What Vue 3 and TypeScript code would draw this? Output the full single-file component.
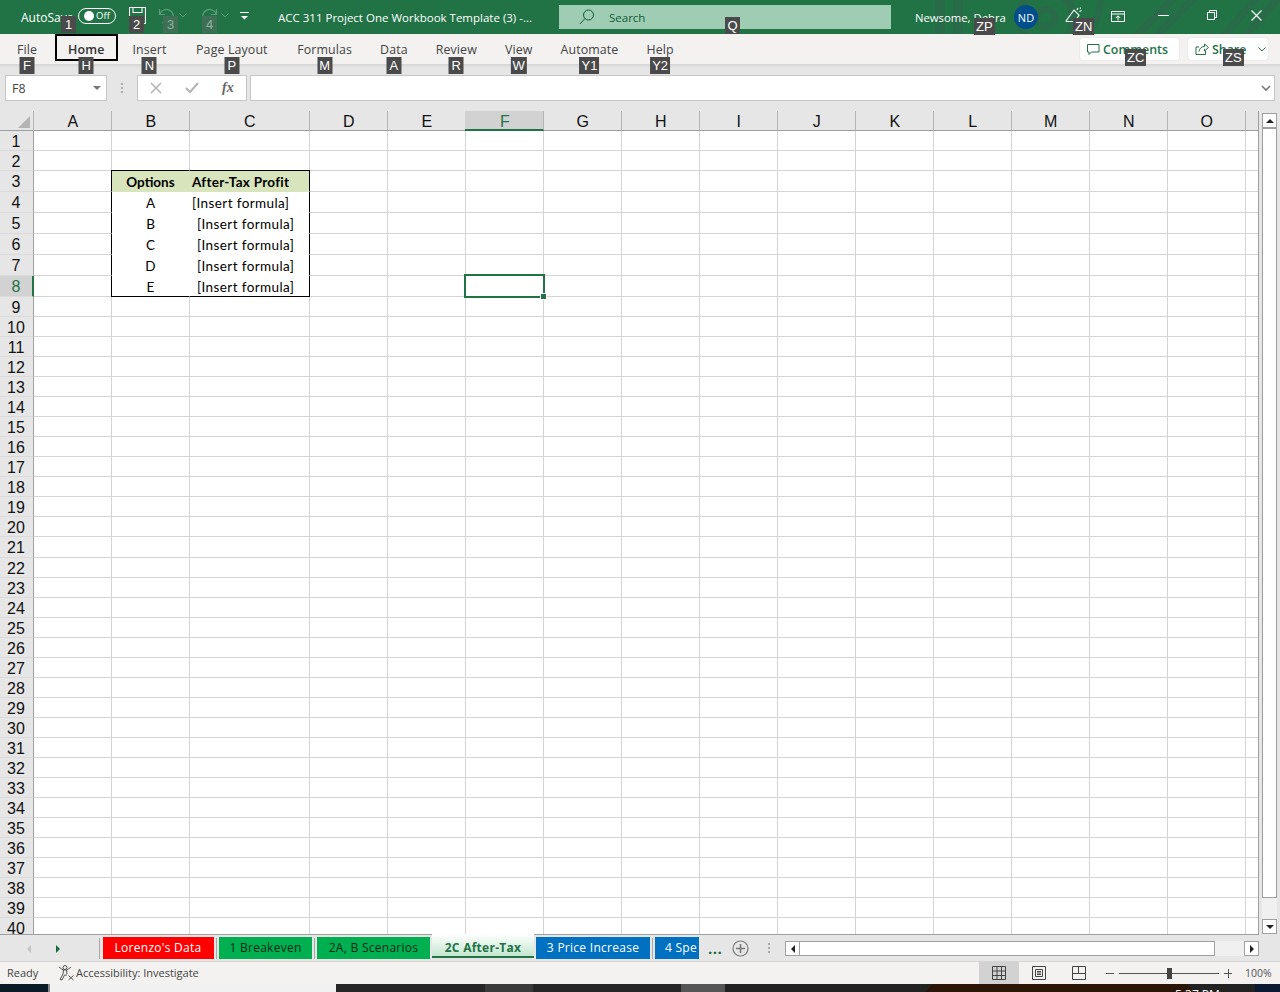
<script setup lang="ts">
const colWidths = [78, 78, 120, 78, 78, 78, 78, 78, 78, 78, 78, 78, 78, 78, 78, 13]
const colNames = ['A', 'B', 'C', 'D', 'E', 'F', 'G', 'H', 'I', 'J', 'K', 'L', 'M', 'N', 'O', '']
const rows = Array.from({ length: 40 }, (_, i) => i + 1)
const rowHeight = (r: number) => ((r >= 3 && r <= 8) || r === 21 ? 21 : 20)
const gridCols = '34px ' + colWidths.map((w) => w + 'px').join(' ')
const gridRows = '20px ' + rows.map((r) => rowHeight(r) + 'px').join(' ')

type Content = { text: string; cls: string }
const content: Record<string, Content> = {
  'B3': { text: 'Options', cls: 'hd center tl' },
  'C3': { text: 'After-Tax Profit', cls: 'hd pad tr spaced' },
  'B4': { text: 'A', cls: 'tb center le' },
  'C4': { text: '[Insert formula]', cls: 'tb pad ri formula-text' },
  'B5': { text: 'B', cls: 'tb center le' },
  'C5': { text: '[Insert formula]', cls: 'tb ind ri formula-text' },
  'B6': { text: 'C', cls: 'tb center le' },
  'C6': { text: '[Insert formula]', cls: 'tb ind ri formula-text' },
  'B7': { text: 'D', cls: 'tb center le' },
  'C7': { text: '[Insert formula]', cls: 'tb ind ri formula-text' },
  'B8': { text: 'E', cls: 'tb center le bo' },
  'C8': { text: '[Insert formula]', cls: 'tb ind ri bo formula-text' },
}
const cell = (c: string, r: number) => content[c + r]

const ribbonTabs = [
  { label: 'File', tip: 'F' },
  { label: 'Home', tip: 'H', active: true },
  { label: 'Insert', tip: 'N' },
  { label: 'Page Layout', tip: 'P' },
  { label: 'Formulas', tip: 'M' },
  { label: 'Data', tip: 'A' },
  { label: 'Review', tip: 'R' },
  { label: 'View', tip: 'W' },
  { label: 'Automate', tip: 'Y1' },
  { label: 'Help', tip: 'Y2' },
]
const sheets = [
  { label: "Lorenzo's Data", cls: 'red' },
  { label: '1 Breakeven', cls: 'green' },
  { label: '2A, B Scenarios', cls: 'green wide' },
  { label: '2C After-Tax', cls: 'current' },
  { label: '3 Price Increase', cls: 'blue' },
  { label: '4 Spe', cls: 'blue cut' },
]
</script>

<template>
  <div class="app">
    <header class="title">
      <svg class="pattern" width="400" height="34" viewBox="0 0 400 34">
        <g fill="none" stroke="#296a49" stroke-width="10">
          <circle cx="166" cy="18" r="9" stroke-width="6" />
          <circle cx="166" cy="18" r="27" stroke-width="8" />
          <path d="M60 -4v44M78 -4v44" />
          <path d="M252 40l46-46M272 40l46-46M340 40l40-46M362 40l40-46" stroke-width="7" />
          <path d="M220 -6a60 60 0 0 1 -20 50" stroke-width="6" />
        </g>
      </svg>
      <span class="autosave">AutoSave</span>
      <span class="toggle"><i class="knob"></i><b>Off</b></span>
      <svg class="qa save" width="17" height="18" viewBox="0 0 17 18" fill="none" stroke="#fff" stroke-width="1.1"><path d="M.5.500h16v16h-16zM4 .500v5h9v-5M4 16.500v-6h9v6" /></svg>
      <svg class="qa undo" width="18" height="18" viewBox="0 0 18 18" fill="none" stroke="#5f9a7c" stroke-width="1.2"><path d="M1.500 2v5.500h5.500M1.800 7.200a7 7 0 1 1 2.600 8" /></svg>
      <svg class="qa chev1" width="8" height="5" viewBox="0 0 8 5" fill="none" stroke="#5f9a7c"><path d="M.5.500l3.500 3.500 3.500-3.500" /></svg>
      <svg class="qa redo" width="18" height="18" viewBox="0 0 18 18" fill="none" stroke="#5f9a7c" stroke-width="1.2"><path d="M16.500 2v5.500h-5.500M16.200 7.200a7 7 0 1 0-2.600 8" /></svg>
      <svg class="qa chev2" width="8" height="5" viewBox="0 0 8 5" fill="none" stroke="#5f9a7c"><path d="M.5.500l3.500 3.500 3.500-3.500" /></svg>
      <svg class="qa cust" width="9" height="8" viewBox="0 0 9 8" fill="#fff"><rect y="0" width="9" height="1" /><path d="M1 4h7L4.500 7.500z" /></svg>
      <span class="doc">ACC 311 Project One Workbook Template (3)  -...</span>
      <div class="search">
        <svg width="16" height="16" viewBox="0 0 16 16" fill="none" stroke="#0f5c35" stroke-width="1"><circle cx="9.500" cy="6" r="5" /><path d="M6 9.500L.8 15" /></svg>
        <span>Search</span>
      </div>
      <span class="user">Newsome, Debra</span>
      <span class="avatar">ND</span>
      <svg class="wand" width="18" height="18" viewBox="0 0 18 18" fill="none" stroke="#fff" stroke-width="1.1"><path d="M1 15L9 4l5 5-4 6.500H2zM12 4l1-2M14.500 5.500l2-1M15 2.500l.8-.8" /></svg>
      <svg class="rib" width="14" height="11" viewBox="0 0 14 11" fill="none" stroke="#fff"><path d="M.5.500h13v10H.500zM.500 3h13M7 9.500V5M4.800 7L7 4.800 9.200 7" /></svg>
      <svg class="win min" width="11" height="1" viewBox="0 0 11 1"><rect width="11" height="1" fill="#fff" /></svg>
      <svg class="win max" width="10" height="10" viewBox="0 0 10 10" fill="none" stroke="#fff"><path d="M.5 2.500h7v7h-7zM2.500 2.500v-2h7v7h-2" /></svg>
      <svg class="win cls" width="11" height="11" viewBox="0 0 11 11" fill="none" stroke="#fff" stroke-width="1.100"><path d="M.5.500l10 10M10.500.500l-10 10" /></svg>
      <span class="tip t1">1</span>
      <span class="tip t2">2</span>
      <span class="tip t3">3</span>
      <span class="tip t4">4</span>
      <span class="tip tq">Q</span>
      <span class="tip tzp">ZP</span>
      <span class="tip tzn">ZN</span>
    </header>

    <nav class="ribbon">
      <div class="rtabs">
        <div v-for="t in ribbonTabs" :key="t.label" class="rtab" :class="{ active: t.active }">
          {{ t.label }}
          <span class="tip rtip">{{ t.tip }}</span>
        </div>
      </div>
      <div class="actions">
        <div class="btn comments">
          <svg width="13" height="13" viewBox="0 0 13 13" fill="none" stroke="#217346"><path d="M.5 1.500h11.500v7.500H4.500L2 11.500V9H.5z" /></svg>
          <span>Comments</span>
          <span class="tip btip zc">ZC</span>
        </div>
        <div class="btn share">
          <svg width="14" height="14" viewBox="0 0 14 14" fill="none" stroke="#217346"><path d="M10.500 9v3.500h-9.500V5h3M4 9.500C4.500 6 7 4.500 9.500 4.500V2l4 3.500-4 3.500V6.800" /></svg>
          <span>Share</span>
          <svg class="mini" width="8" height="5" viewBox="0 0 8 5" fill="none" stroke="#217346"><path d="M.5.500l3.500 3.500 3.500-3.500" /></svg>
          <span class="tip btip zs">ZS</span>
        </div>
      </div>
    </nav>

    <section class="formula">
      <div class="namebox">
        <span>F8</span>
        <i class="tri-down"></i>
      </div>
      <div class="vdots"><i></i><i></i><i></i></div>
      <div class="fbtns">
        <svg width="12" height="12" viewBox="0 0 12 12" fill="none" stroke="#b4b4b4" stroke-width="1.500"><path d="M1 1l10 10M11 1L1 11" /></svg>
        <svg width="14" height="12" viewBox="0 0 14 12" fill="none" stroke="#b4b4b4" stroke-width="2"><path d="M1 6l4 4 8-9" /></svg>
        <em>fx</em>
      </div>
      <div class="finput">
        <svg width="10" height="7" viewBox="0 0 10 7" fill="none" stroke="#777" stroke-width="1.600"><path d="M1 1l4 4 4-4" /></svg>
      </div>
    </section>

    <main class="sheet">
      <div class="grid" :style="{ gridTemplateColumns: gridCols, gridTemplateRows: gridRows }">
        <div class="corner"><i></i></div>
        <div v-for="c in colNames" :key="'h' + c" class="colh" :class="{ sel: c === 'F' }">{{ c }}</div>
        <template v-for="r in rows" :key="r">
          <div class="rowh" :class="{ sel: r === 8 }">{{ r }}</div>
          <div
            v-for="c in colNames"
            :key="c + r"
            class="cell"
            :class="[cell(c, r)?.cls, { active: c === 'F' && r === 8 }]"
          >{{ cell(c, r)?.text }}<i v-if="c === 'F' && r === 8" class="handle"></i></div>
        </template>
      </div>
      <aside class="vscroll">
        <div class="sbtn"><i class="up"></i></div>
        <div class="vthumb"></div>
        <div class="vrest"></div>
        <div class="sbtn"><i class="down"></i></div>
      </aside>
    </main>

    <section class="tabsbar">
      <div class="navs">
        <i class="arrow-l"></i>
        <i class="arrow-r"></i>
      </div>
      <div class="sheet-tabs">
        <div v-for="s in sheets" :key="s.label" class="stab" :class="s.cls">{{ s.label }}</div>
      </div>
      <span class="more">...</span>
      <svg class="plus" width="17" height="17" viewBox="0 0 17 17" fill="none" stroke="#7a7a7a"><circle cx="8.500" cy="8.500" r="7.500" stroke-width="1.200" /><path d="M8.500 4v9M4 8.500h9" stroke-width="1.600" /></svg>
      <div class="vdots tdots"><i></i><i></i><i></i></div>
      <div class="hscroll">
        <div class="hbtn"><i class="left"></i></div>
        <div class="hthumb"></div>
        <div class="hrest"></div>
        <div class="hbtn"><i class="right"></i></div>
      </div>
    </section>

    <footer class="status">
      <span class="ready">Ready</span>
      <svg class="acc" width="17" height="16" viewBox="0 0 17 16" fill="none" stroke="#555"><circle cx="7" cy="2.500" r="2" /><path d="M1 2L5 5h4l4-3M5.500 5L5 9 2 14.500l2 .5 2.500-5H9M8.500 5L9 9" /><path d="M10.500 10.500l5 4.500M15.500 10.500l-5 4.500" /></svg>
      <span class="accy">Accessibility: Investigate</span>
      <div class="views">
        <div class="view on">
          <svg width="14" height="14" viewBox="0 0 14 14" fill="none" stroke="#444"><path d="M.5.500h13v13H.500zM.500 5h13M.500 9.500h13M5 .500v13M9.500 .500v13" /></svg>
        </div>
        <div class="view">
          <svg width="14" height="14" viewBox="0 0 14 14" fill="none" stroke="#444"><path d="M.5.500h13v13H.500zM3.500 3.500h7v7h-7zM5 5.500h4M5 7h4M5 8.500h4" /></svg>
        </div>
        <div class="view">
          <svg width="14" height="14" viewBox="0 0 14 14" fill="none" stroke="#444"><path d="M.5.500h13v13H.500zM.500 7.500h6v-7M6.500 7.500h7" /></svg>
        </div>
      </div>
      <div class="zoom">
        <i class="zm"></i>
        <div class="ztrack"><i class="zthumb"></i></div>
        <i class="zp"></i>
      </div>
      <span class="pct">100%</span>
    </footer>

    <div class="taskbar">
      <i class="tk navy"></i>
      <i class="tk light"></i>
      <i class="tk dark a"></i>
      <i class="tk mid b"></i>
      <i class="tk dark c"></i>
      <i class="tk hi d"></i>
      <i class="tk dark e"></i>
      <i class="tk brown f"></i>
      <i class="tk dark g"></i>
      <i class="tk navy h"></i>
      <span class="clock">5:37 PM</span>
    </div>
  </div>
</template>

<style>
html, body { margin: 0; padding: 0; background: #e6e6e6; }
</style>

<style scoped>
.app { width: 1280px; height: 992px; display: flex; flex-direction: column; overflow: hidden; font-family: "Open Sans", "Noto Sans", sans-serif; position: relative; color: #444; }

/* title bar */
.title { height: 34px; flex: none; background: #217346; color: #fff; display: flex; align-items: center; position: relative; font-size: 12px; }
.title > * { flex: none; }
.pattern { position: absolute; right: 0; top: 0; }
.autosave { margin-left: 21px; width: 57px; font-size: 12px; white-space: nowrap; }
.toggle { width: 38px; height: 16px; box-sizing: border-box; border: 1px solid #fff; border-radius: 9px; position: relative; display: block; margin-top: -3px; }
.knob { position: absolute; left: 5px; top: 2px; width: 10px; height: 10px; border-radius: 50%; background: #fff; }
.toggle b { position: absolute; left: 17px; top: 0; font-weight: 400; font-size: 9.500px; line-height: 14px; }
.qa { position: relative; }
.save { margin-left: 13px; margin-top: -3px; }
.undo { margin-left: 12px; margin-top: -3px; }
.chev1 { margin-left: 3px; margin-top: -3px; }
.redo { margin-left: 13px; margin-top: -3px; }
.chev2 { margin-left: 3px; margin-top: -3px; }
.cust { margin-left: 11px; margin-top: -3px; }
.doc { margin-left: 29px; width: 281px; white-space: pre; font-size: 11.500px; position: relative; overflow: hidden; }
.search { margin-left: 0; width: 332px; height: 24px; background: #9fcdb3; display: flex; align-items: center; color: #0f5c35; font-size: 11.500px; position: relative; }
.search svg { margin-left: 20px; margin-top: -1px; }
.search span { margin-left: 14px; }
.user { margin-left: 24px; width: 99px; white-space: nowrap; font-size: 11.300px; position: relative; }
.avatar { width: 24px; height: 24px; border-radius: 50%; background: #004e8c; display: flex; align-items: center; justify-content: center; font-size: 11px; position: relative; }
.wand { margin-left: 27px; position: relative; margin-top: -4px; }
.rib { margin-left: 28px; position: relative; margin-top: -2px; }
.win { position: relative; margin-top: -4px; }
.min { margin-left: 33px; }
.max { margin-left: 38px; }
.cls { margin-left: 34px; }

/* key tips */
.tip { position: absolute; background: #4a4a4a; color: #fff; font-family: "Liberation Sans", sans-serif; font-size: 13px; line-height: 17px; height: 17px; padding: 0 2px; min-width: 15px; box-sizing: border-box; text-align: center; z-index: 5; font-weight: 400; white-space: nowrap; letter-spacing: 0; }
.t1 { left: 61px; top: 16px; }
.t2 { left: 129px; top: 16px; }
.t3 { left: 163px; top: 16px; background: #3f6f55; color: #8fb3a0; }
.t4 { left: 202px; top: 16px; background: #3f6f55; color: #8fb3a0; }
.tq { left: 725px; top: 17px; }
.tzp { left: 974px; top: 18px; }
.tzn { left: 1073px; top: 18px; }
.rtip { top: 23px; left: 50%; transform: translateX(-50%); }
.btip { top: 11px; }
.zc { left: 45px; }
.zs { left: 35px; }

/* ribbon */
.ribbon { height: 30px; flex: none; background: #f3f2f1; display: flex; justify-content: space-between; position: relative; z-index: 3; }
.rtabs { display: flex; gap: 29.500px; padding-left: 17px; }
.rtab { position: relative; font-size: 12.400px; letter-spacing: .12px; line-height: 31px; color: #444; white-space: nowrap; }
.rtab:nth-child(2) { margin-left: 1.500px; }
.rtab:nth-child(3) { margin-left: -1.500px; }
.rtab:nth-child(n+6) { margin-left: -1.500px; }
.rtab.active { font-weight: 600; color: #333; }
.rtab.active::before { content: ""; position: absolute; left: -13px; right: -14px; top: 0; height: 27px; box-sizing: border-box; border: 2px solid #000; }
.actions { display: flex; gap: 9px; padding-right: 12px; padding-top: 4px; }
.btn { position: relative; height: 22px; background: #fff; border-radius: 2px; box-shadow: 0 0 1px #bbb; display: flex; align-items: center; color: #217346; font-size: 12.400px; font-weight: 600; }
.comments { width: 99px; padding-left: 7px; box-sizing: border-box; gap: 3px; }
.share { width: 80px; padding-left: 7px; box-sizing: border-box; gap: 3px; }
.mini { margin-left: 9px; }

/* formula bar */
.formula { height: 47px; flex: none; box-sizing: border-box; padding: 11px 5px 10px 5px; background: linear-gradient(#d5d5d5, #e6e6e6 4px); display: flex; align-items: stretch; }
.namebox { width: 102px; box-sizing: border-box; background: #fff; border: 1px solid #c6c6c6; display: flex; align-items: center; justify-content: space-between; padding: 0 5px 0 6px; font-size: 12.400px; color: #444; }
.tri-down { width: 0; height: 0; border-left: 4px solid transparent; border-right: 4px solid transparent; border-top: 4px solid #777; }
.vdots { width: 30px; display: flex; flex-direction: column; align-items: center; justify-content: center; gap: 2px; }
.vdots i { width: 2px; height: 2px; background: #aaa; }
.fbtns { width: 110px; box-sizing: border-box; background: #fff; border: 1px solid #c6c6c6; display: flex; align-items: center; padding-left: 12px; gap: 23px; }
.fbtns em { font-family: "Liberation Serif", serif; font-size: 14px; color: #666; font-style: italic; font-weight: 700; margin-left: 0; }
.finput { width: 1025px; margin-left: 3px; box-sizing: border-box; background: #fff; border: 1px solid #c6c6c6; display: flex; align-items: center; justify-content: flex-end; padding-right: 3px; }

/* sheet */
.sheet { height: 824px; flex: none; display: flex; background: #e6e6e6; }
.grid { width: 1259px; height: 824px; flex: none; display: grid; overflow: hidden; background: #fff; box-sizing: border-box; border-right: 1px solid #9f9f9f; border-bottom: 1px solid #9f9f9f; position: relative; align-content: start; }
.corner { background: #e6e6e6; border-right: 1px solid #b5b5b5; border-bottom: 1px solid #9f9f9f; box-sizing: border-box; position: relative; }
.corner i { position: absolute; right: 3px; bottom: 2px; width: 0; height: 0; border-left: 12px solid transparent; border-bottom: 12px solid #b4b4b4; }
.colh { background: #e6e6e6; border-right: 1px solid #b5b5b5; border-bottom: 1px solid #9f9f9f; box-sizing: border-box; font: 16px/22px "Liberation Sans", sans-serif; text-align: center; color: #111; padding-left: .5px; overflow: hidden; }
.colh.sel { background: #d2d2d2; color: #217346; border-bottom: 2px solid #217346; margin-left: -1px; padding-left: 2px; }
.rowh { background: #e6e6e6; border-right: 1px solid #9f9f9f; border-bottom: 1px solid #dadada; box-sizing: border-box; font: 16px/22px "Liberation Sans", sans-serif; text-align: center; color: #111; padding-right: 1px; overflow: hidden; }
.rowh.sel { background: #d2d2d2; color: #217346; border-right: 2px solid #217346; padding-right: 0; }
.cell { border-right: 1px solid #d4d4d4; border-bottom: 1px solid #d4d4d4; box-sizing: border-box; font-family: Lato, "Open Sans", sans-serif; font-size: 13.500px; line-height: 21px; color: #000; white-space: nowrap; position: relative; }
.cell.center { text-align: center; }
.cell.hd { background: #d8e4bc; font-weight: 700; border-color: transparent; border-top: 1px solid #000; margin-top: -1px; height: 22px; line-height: 22px; }
.cell.spaced { letter-spacing: .27px; }
.cell.tb { background: #fff; border-color: transparent; line-height: 23px; }
.cell.formula-text { letter-spacing: .4px; }
.cell.pad { padding-left: 2px; }
.cell.ind { padding-left: 7px; }
.cell.tl, .cell.le { border-left: 1px solid #000; margin-left: -1px; }
.cell.tr, .cell.ri { border-right: 1px solid #000; }
.cell.bo { border-bottom: 1px solid #000; }
.cell.active { outline: 2px solid #217346; outline-offset: 0; margin: 0 1px 1px 0; border: none; z-index: 2; }
.handle { position: absolute; right: -4px; bottom: -4px; background: #217346; border: 1px solid #fff; box-sizing: content-box; width: 5px; height: 5px; }

/* vertical scrollbar */
.vscroll { width: 21px; flex: none; display: flex; flex-direction: column; align-items: center; padding: 2px 0 1px; box-sizing: border-box; }
.sbtn { width: 15px; height: 15px; flex: none; background: #fff; border: 1px solid #a0a0a0; box-sizing: border-box; display: flex; align-items: center; justify-content: center; }
.up { width: 0; height: 0; border-left: 4px solid transparent; border-right: 4px solid transparent; border-bottom: 4px solid #222; }
.down { width: 0; height: 0; border-left: 4px solid transparent; border-right: 4px solid transparent; border-top: 4px solid #222; }
.vthumb { width: 15px; height: 770px; flex: none; background: #fff; border: 1px solid #a0a0a0; box-sizing: border-box; }
.vrest { flex: 1; width: 15px; background: #f0f0f0; }

/* sheet tabs */
.tabsbar { height: 27px; flex: none; background: #e6e6e6; display: flex; align-items: flex-start; border-bottom: 1px solid #d4d4d4; box-sizing: border-box; position: relative; z-index: 2; }
.navs { width: 100px; height: 21px; margin-top: 3px; box-sizing: border-box; border-right: 1px solid #a8a8a8; position: relative; flex: none; }
.arrow-l { position: absolute; left: 27px; top: 7px; width: 0; height: 0; border-top: 4px solid transparent; border-bottom: 4px solid transparent; border-right: 4px solid #c4c4c4; }
.arrow-r { position: absolute; left: 56px; top: 7px; width: 0; height: 0; border-top: 4px solid transparent; border-bottom: 4px solid transparent; border-left: 4px solid #0e6b3a; }
.sheet-tabs { display: flex; margin-left: 3px; width: 596px; flex: none; margin-top: -1px; padding-top: 1px; overflow: hidden; }
.stab { height: 22px; margin-top: 2px; flex: none; font-family: "Open Sans", sans-serif; font-size: 12px; letter-spacing: .27px; line-height: 22px; text-align: center; white-space: nowrap; margin-right: 5px; position: relative; }
.stab::after { content: ""; position: absolute; right: -3px; top: 1px; bottom: 0; width: 1px; background: #a8a8a8; }
.red { background: #ff0000; color: #fff; width: 111px; padding-right: 1px; box-sizing: border-box; }
.green { background: #00b050; color: #0a2a18; width: 93px; }
.wide { width: 113px; margin-right: 2px; }
.wide::after { display: none; }
.current { margin-top: -1px; padding-top: 3px; background: linear-gradient(#ffffff, #c3e6cf); color: #217346; font-weight: 700; width: 102px; margin-right: 2px; border-bottom: 2px solid #217346; box-sizing: content-box; height: 19px; line-height: 21px; overflow: hidden; }
.current::after { display: none; }
.blue { background: #0070c0; color: #fff; width: 114px; }
.cut { width: 44px; margin-right: 0; overflow: hidden; text-align: left; padding-left: 10px; box-sizing: border-box; }
.cut::after { display: none; }
.more { margin-left: 9px; width: 24px; flex: none; font-size: 15px; font-weight: 700; color: #0e6b3a; line-height: 26px; letter-spacing: .5px; }
.plus { margin-top: 5px; margin-left: 0; flex: none; }
.tdots { width: 24px; flex: none; height: 12px; margin-top: 7px; margin-left: 8px; }
.hscroll { display: flex; margin-left: 4px; margin-top: 6px; height: 15px; flex: none; width: 474px; }
.hbtn { width: 15px; height: 15px; flex: none; box-sizing: border-box; border: 1px solid #a0a0a0; background: #fff; display: flex; align-items: center; justify-content: center; }
.left { width: 0; height: 0; border-top: 4px solid transparent; border-bottom: 4px solid transparent; border-right: 4px solid #222; }
.right { width: 0; height: 0; border-top: 4px solid transparent; border-bottom: 4px solid transparent; border-left: 4px solid #222; }
.hthumb { width: 415px; flex: none; box-sizing: border-box; border: 1px solid #a0a0a0; border-left: none; background: #fff; }
.hrest { flex: 1; background: #f0f0f0; }

/* status */
.status { height: 22px; flex: none; background: #f3f2f1; display: flex; align-items: center; font-size: 11px; color: #444; }
.ready { margin-left: 7px; width: 51px; flex: none; margin-top: -1px; }
.acc { flex: none; }
.accy { margin-left: 1px; width: 223px; flex: none; white-space: nowrap; font-size: 11px; margin-top: -1px; }
.views { display: flex; margin-left: 680px; flex: none; }
.view { width: 40px; height: 22px; display: flex; align-items: center; justify-content: center; }
.view.on { background: #d2d2d2; }
.zoom { display: flex; align-items: center; margin-left: 7px; width: 126px; flex: none; }
.zm { width: 8px; height: 1px; background: #555; flex: none; }
.ztrack { width: 100px; height: 1px; margin-left: 5px; background: #555; position: relative; flex: none; }
.zthumb { position: absolute; left: 48px; top: -5px; width: 5px; height: 11px; background: #444; }
.zp { width: 8px; height: 9px; flex: none; margin-left: 5px; background: linear-gradient(#555, #555) center/8px 1px no-repeat, linear-gradient(#555, #555) center/1px 9px no-repeat; }
.pct { margin-left: 13px; flex: none; font-size: 10.500px; color: #555; }

/* taskbar */
.taskbar { height: 8px; flex: none; display: flex; background: #222; position: relative; overflow: hidden; }
.tk { height: 8px; flex: none; display: block; }
.tk.navy { width: 48px; background: #0b1a26; }
.tk.light { width: 288px; background: #f1f1f1; border-left: 2px solid #888; box-sizing: border-box; }
.tk.a { width: 149px; background: #262626; }
.tk.b { width: 48px; background: #3a3a3a; }
.tk.c { width: 148px; background: #262626; }
.tk.d { width: 44px; background: #555; }
.tk.e { width: 200px; background: #222; }
.tk.f { width: 270px; background: #2a1506; clip-path: polygon(8px 0, 262px 0, 100% 100%, 0 100%); }
.tk.g { width: 60px; background: #222; }
.tk.navy.h { width: 25px; background: #0b1a30; }
.clock { position: absolute; left: 1175px; top: 4px; font: 12px/14px "Open Sans", sans-serif; color: #fff; white-space: nowrap; }
</style>
